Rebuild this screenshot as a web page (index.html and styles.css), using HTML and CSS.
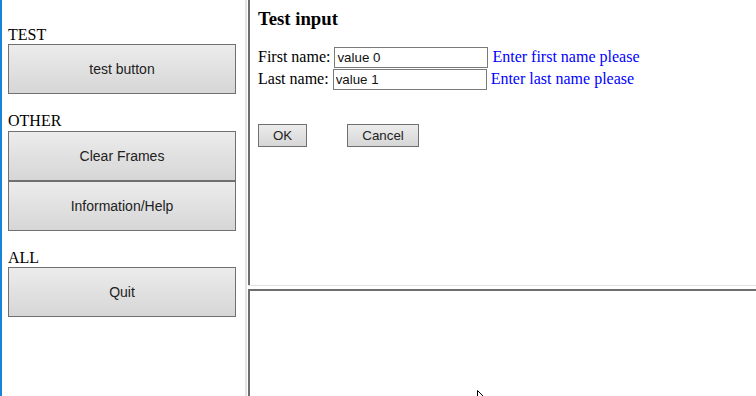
FILE: index.html
```html
<!DOCTYPE html>
<html>
<head>
<meta charset="utf-8">
<title>Test input</title>
<link rel="stylesheet" href="styles.css">
</head>
<body>
<div class="window">
  <aside class="menu">
    <section class="group">
      <div class="group-label">TEST</div>
      <button class="btn menu-btn">test button</button>
    </section>
    <section class="group">
      <div class="group-label">OTHER</div>
      <button class="btn menu-btn">Clear Frames</button>
      <button class="btn menu-btn">Information/Help</button>
    </section>
    <section class="group">
      <div class="group-label">ALL</div>
      <button class="btn menu-btn">Quit</button>
    </section>
  </aside>
  <div class="gutter"></div>
  <main class="frames">
    <section class="frame frame-top">
      <h3 class="title">Test input</h3>
      <form class="form">
        <div class="row">
          <label class="label">First name:</label>
          <input class="field" type="text" value="value 0">
          <span class="hint">Enter first name please</span>
        </div>
        <div class="row">
          <label class="label">Last name:</label>
          <input class="field" type="text" value="value 1">
          <span class="hint">Enter last name please</span>
        </div>
      </form>
      <div class="actions">
        <button class="btn action-btn ok-btn">OK</button>
        <button class="btn action-btn">Cancel</button>
      </div>
    </section>
    <div class="hsplit"></div>
    <section class="frame frame-bottom"></section>
  </main>
  <svg class="cursor" width="12" height="19" viewBox="0 0 12 19">
    <path d="M0.5 0.5 L0.5 16 L4.3 12.3 L7 18.2 L9.2 17.2 L6.6 11.5 L11.5 11.5 Z" fill="#fff" stroke="#000" stroke-width="1"/>
  </svg>
</div>
</body>
</html>
```

FILE: styles.css
```css
html, body {
  margin: 0;
  padding: 0;
  background: #fff;
}

body {
  font-family: "Liberation Serif", "Times New Roman", serif;
  font-size: 16px;
  color: #000;
}

.window {
  position: relative;
  display: flex;
  width: 756px;
  height: 396px;
  overflow: hidden;
}

/* left menu frame */
.menu {
  flex: none;
  width: 244px;
  box-sizing: border-box;
  border-left: 2px solid #1883d7;
  padding: 8px 8px 0 6px;
}

.group {
  display: flex;
  flex-direction: column;
  margin-top: 18px;
}

.group-label {
  line-height: 18.4px;
}

.btn {
  font-family: "Liberation Sans", Arial, sans-serif;
  color: #222;
  background: linear-gradient(#ececec, #d6d6d6);
  border: 1px solid #707070;
  border-radius: 0;
  box-sizing: border-box;
  padding: 0;
  margin: 0;
}

.menu-btn {
  width: 100%;
  height: 50px;
  font-size: 14px;
}

.gutter {
  flex: none;
  width: 2px;
  margin: 0 1px;
  background: #e4e4e4;
}

/* right frames */
.frames {
  flex: 1;
  display: flex;
  flex-direction: column;
}

.frame-top {
  flex: none;
  height: 285px;
  box-sizing: border-box;
  border-left: 2px solid #6e6e6e;
  padding: 8px;
}

.hsplit {
  flex: none;
  height: 4px;
  box-sizing: border-box;
  border-top: 1px solid #e2e2e2;
}

.frame-bottom {
  flex: 1;
  border-left: 2px solid #6e6e6e;
  border-top: 2px solid #6e6e6e;
}

.title {
  margin: 0;
  font-size: 18.72px;
  font-weight: bold;
  line-height: 21px;
}

.form {
  margin: 18px 0 0 0;
}

.row {
  display: flex;
  align-items: baseline;
  height: 22px;
}

.label {
  margin-right: 4px;
}

.field {
  width: 154px;
  height: 21px;
  box-sizing: border-box;
  border: 1px solid #7a7a7a;
  padding: 1px 2px;
  margin: 0;
  font-family: "Liberation Sans", Arial, sans-serif;
  font-size: 13.33px;
  color: #111;
  background: #fff;
}

.hint {
  margin-left: 4px;
  color: #0000ff;
}

.actions {
  display: flex;
  margin-top: 33px;
}

.action-btn {
  height: 23px;
  padding: 0 14px;
  font-size: 13.33px;
}

.ok-btn {
  margin-right: 40px;
}

.cursor {
  position: absolute;
  left: 477px;
  top: 390px;
}
```
